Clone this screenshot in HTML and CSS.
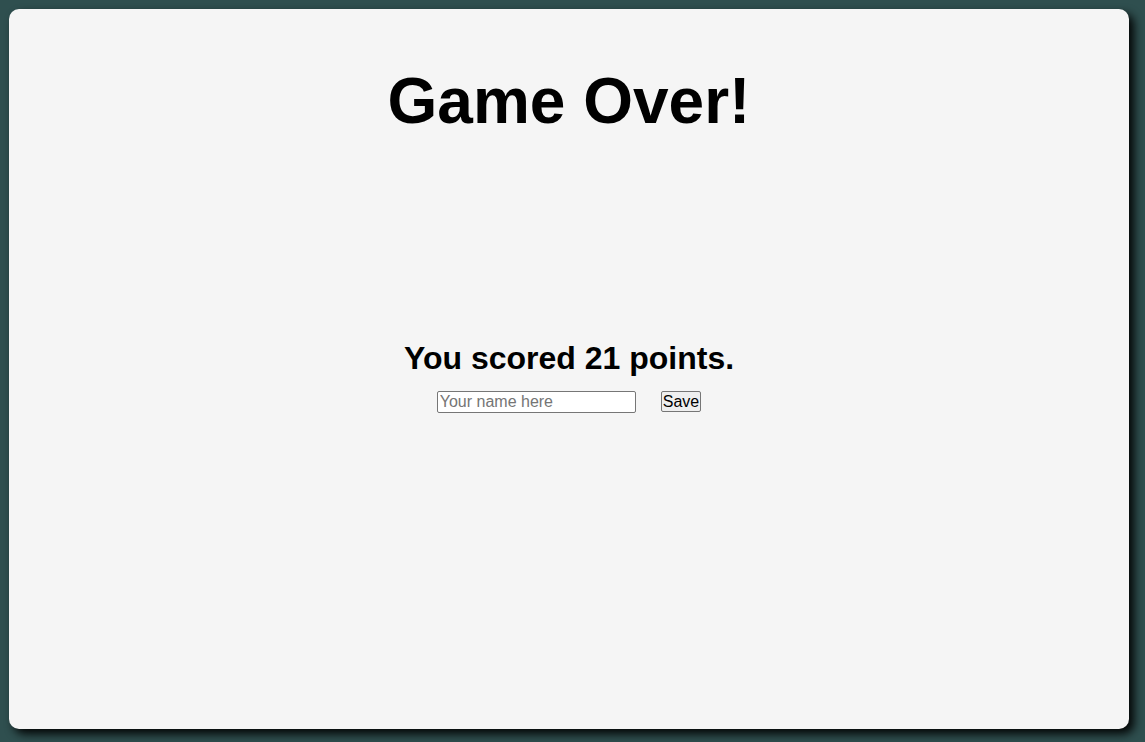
FILE: index.html
```html
<!DOCTYPE html>
<html>
<head>
<meta charset="utf-8">
<link rel="stylesheet" href="styles.css">
</head>
<body>
<div class="card">
  <h1 class="title">Game Over!</h1>
  <div class="result">
    <h2 class="score">You scored 21 points.</h2>
    <form class="save-form">
      <input class="name-input" type="text" placeholder="Your name here">
      <button class="save-btn" type="button">Save</button>
    </form>
  </div>
</div>
</body>
</html>
```
FILE: styles.css
```css
html, body {
  margin: 0;
  padding: 0;
}
body {
  background: #2f4f4f;
  padding: 9px;
  font-family: "Liberation Sans", Arial, sans-serif;
  height: 742px;
  box-sizing: border-box;
  overflow: hidden;
}
.card {
  width: 1120px;
  height: 720px;
  background: #f5f5f5;
  border-radius: 10px;
  box-shadow: 5px 5px 10px rgba(0,0,0,0.95);
  display: flex;
  flex-direction: column;
  align-items: center;
}
.title {
  font-size: 64px;
  font-weight: bold;
  margin: 55px 0 0 0;
  line-height: normal;
  color: #000;
}
.result {
  margin-top: 202px;
  display: flex;
  flex-direction: column;
  align-items: center;
}
.score {
  font-size: 32px;
  font-weight: bold;
  margin: 0;
  line-height: normal;
}
.save-form {
  margin-top: 14px;
  display: flex;
  align-items: flex-start;
  gap: 25px;
}
.name-input {
  width: 199px;
  height: 22px;
  box-sizing: border-box;
  font-family: "Liberation Sans", Arial, sans-serif;
  font-size: 16px;
  padding: 1px 2px;
  border: 1px solid #767676;
  border-radius: 2px;
  background: #fff;
  margin: 0;
}
.name-input::placeholder {
  color: #757575;
}
.save-btn {
  height: 21px;
  box-sizing: border-box;
  font-family: "Liberation Sans", Arial, sans-serif;
  font-size: 16px;
  padding: 0 1px;
  border: 1px solid #767676;
  border-radius: 2px;
  background: #efefef;
  color: #000;
  margin: 0;
  line-height: 18px;
}
```
